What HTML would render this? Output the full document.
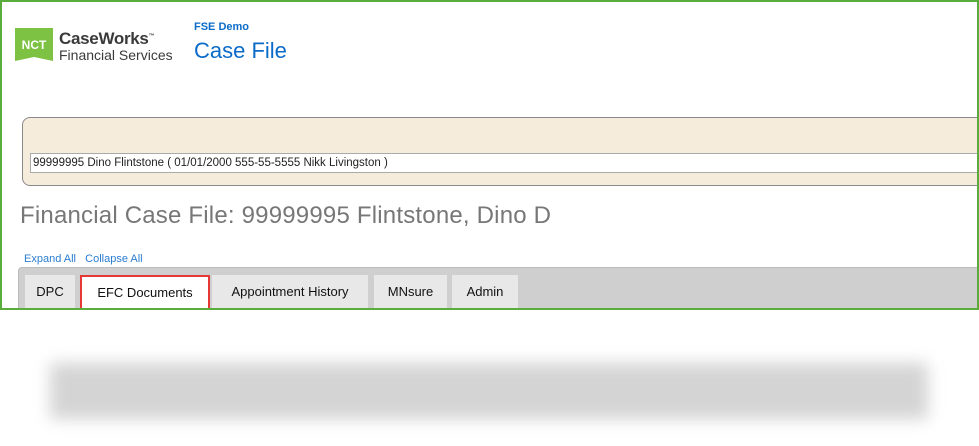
<!DOCTYPE html>
<html><head><style>
body{margin:0;width:979px;height:446px;background:#fff;position:relative;overflow:hidden;font-family:"Liberation Sans",sans-serif}
.frame{position:absolute;left:0;top:0;width:975px;height:306px;border:2px solid #5aac3c;overflow:hidden}
.abs{position:absolute}
</style></head><body>
<div class="frame">
  <div class="abs" style="left:13px;top:26px;width:38px;height:33px;background:#7dc242;clip-path:polygon(0 0,100% 0,100% 100%,50% 88%,0 100%)"></div>
  <div class="abs" style="left:13px;top:36px;width:38px;text-align:center;font-weight:bold;font-size:12px;color:#fff">NCT</div>
  <div class="abs" style="left:57px;top:27px;font-weight:bold;font-size:17px;color:#3a3a3a;letter-spacing:-0.3px">CaseWorks<sup style="font-size:6px">™</sup></div>
  <div class="abs" style="left:57px;top:45px;font-size:14px;color:#3a3a3a">Financial Services</div>
  <div class="abs" style="left:192px;top:19px;font-weight:bold;font-size:11px;color:#0a6bc9">FSE Demo</div>
  <div class="abs" style="left:192px;top:36px;font-size:22px;color:#0a6bc9">Case File</div>
  <div class="abs" style="left:20px;top:115px;width:970px;height:67px;background:#f5ecdb;border:1px solid #8a8a8a;border-radius:8px"></div>
  <div class="abs" style="left:28px;top:151px;width:950px;height:18px;background:#fff;border:1px solid #aaa;font-size:11.5px;line-height:18px;color:#222;padding-left:2px">99999995 Dino Flintstone ( 01/01/2000 555-55-5555 Nikk Livingston )</div>
  <div class="abs" style="left:18px;top:200px;font-size:24px;color:#777;letter-spacing:0.2px">Financial Case File: 99999995 Flintstone, Dino D</div>
  <div class="abs" style="left:22px;top:251px;font-size:11px;color:#2a7dd0">Expand All&nbsp;&nbsp;&nbsp;Collapse All</div>
  <div class="abs" style="left:16px;top:265px;width:970px;height:50px;background:#cfcfcf;border:1px solid #bbb;border-radius:4px"></div>
  <div class="abs" style="left:23px;top:273px;width:50px;height:38px;background:#e8e8e8;font-size:13px;line-height:34px;text-align:center;color:#111">DPC</div>
  <div class="abs" style="left:78px;top:273px;width:126px;height:31px;background:#fff;border:2px solid #e53935;font-size:13px;line-height:31px;text-align:center;color:#111">EFC Documents</div>
  <div class="abs" style="left:210px;top:273px;width:156px;height:38px;background:#e8e8e8;font-size:13px;line-height:34px;text-align:center;color:#111">Appointment History</div>
  <div class="abs" style="left:372px;top:273px;width:73px;height:38px;background:#e8e8e8;font-size:13px;line-height:34px;text-align:center;color:#111">MNsure</div>
  <div class="abs" style="left:450px;top:273px;width:66px;height:38px;background:#e8e8e8;font-size:13px;line-height:34px;text-align:center;color:#111">Admin</div>
</div>
<div class="abs" style="left:50px;top:363px;width:878px;height:56px;background:#d4d4d4;filter:blur(8px)"></div>
</body></html>
